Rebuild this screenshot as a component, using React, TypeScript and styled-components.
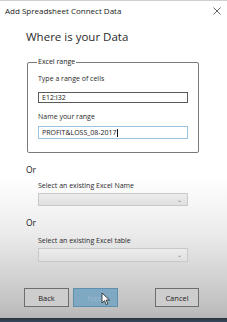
import React from "react";
import styled, { createGlobalStyle } from "styled-components";

const GlobalStyle = createGlobalStyle`
  html, body {
    margin: 0;
    padding: 0;
  }
  body {
    font-family: "Open Sans", "Noto Sans", sans-serif;
    color: #1a1a1a;
  }
`;

const Window = styled.div`
  width: 227px;
  height: 322px;
  box-sizing: border-box;
  border-top: 1px solid #cfcfcf;
  background: linear-gradient(
    to bottom,
    #ffffff 0%,
    #ffffff 55%,
    #ececec 72%,
    #d4d4d4 85%,
    #bfbfbf 96%,
    #b6b6b6 98.8%,
    #2c3440 98.9%,
    #3a4a60 100%
  );
  display: flex;
  flex-direction: column;
  overflow: hidden;
`;

const TitleBar = styled.div`
  height: 18px;
  display: flex;
  align-items: center;
  justify-content: space-between;
  padding: 0 6px 0 5px;
  font-size: 8px;
  color: #222;
`;

const CloseIcon = styled.svg`
  width: 8px;
  height: 8px;
  margin-top: 1px;
`;

const Body = styled.div`
  padding: 10px 0 0 26px;
  display: flex;
  flex-direction: column;
`;

const Heading = styled.div`
  font-size: 11.5px;
  color: #2a2a2a;
  height: 17px;
  margin-bottom: 11px;
`;

const GroupBox = styled.fieldset`
  width: 172px;
  height: 96px;
  box-sizing: border-box;
  margin: 0 0 0 1px;
  padding: 5px 0 0 10px;
  border: 1px solid #7a7a7a;
  border-radius: 2px;
`;

const Legend = styled.legend`
  font-size: 7px;
  line-height: 10px;
  padding: 0 1px;
  margin-left: -1px;
  color: #222;
`;

const FieldLabel = styled.div<{ $top?: number; $bottom?: number }>`
  font-size: 7px;
  color: #2a2a2a;
  margin-top: ${(p) => p.$top ?? 0}px;
  margin-bottom: ${(p) => p.$bottom ?? 0}px;
  height: 11px;
  line-height: 11px;
`;

const TextBox = styled.div<{ $focused?: boolean }>`
  width: 150px;
  height: ${(p) => (p.$focused ? 13 : 11)}px;
  box-sizing: border-box;
  border: 1px solid ${(p) => (p.$focused ? "#9cc3e0" : "#5a5a5a")};
  background: #fff;
  font-size: 7px;
  padding-left: 3px;
  display: flex;
  align-items: center;
  color: #1a1a1a;
`;

const Caret = styled.span`
  display: inline-block;
  width: 1px;
  height: 8px;
  background: #111;
  margin-left: 0.5px;
`;

const OrText = styled.div<{ $top: number }>`
  font-size: 8.5px;
  line-height: 12px;
  color: #222;
  margin-top: ${(p) => p.$top}px;
  height: 12px;
`;

const Indent = styled.div`
  padding-left: 12px;
  display: flex;
  flex-direction: column;
`;

const Combo = styled.div<{ $height: number }>`
  width: 150px;
  height: ${(p) => p.$height}px;
  box-sizing: border-box;
  border: 1px solid #c9c9c9;
  background: linear-gradient(#ececec, #e0e0e0);
  display: flex;
  align-items: center;
  justify-content: flex-end;
  padding-right: 5px;
  font-size: 6px;
  color: #777;
`;

const ButtonRow = styled.div`
  display: flex;
  width: 175px;
  margin: 26px 0 0 -2px;
  gap: 4px;
`;

const Button = styled.div<{ $primary?: boolean; $width: number }>`
  width: ${(p) => p.$width}px;
  height: 19px;
  box-sizing: border-box;
  border: 1px solid ${(p) => (p.$primary ? "#5f8fae" : "#6e6e6e")};
  background: ${(p) => (p.$primary ? "#7fa8c2" : "#cdcdcd")};
  font-size: 7.5px;
  color: ${(p) => (p.$primary ? "#9bbad0" : "#222")};
  display: flex;
  align-items: center;
  justify-content: center;
  position: relative;
`;

const Spacer = styled.div`
  flex: 1;
`;

const Cursor = styled.svg`
  position: absolute;
  left: 27px;
  top: 3px;
  width: 10px;
  height: 14px;
`;

export default function App() {
  return (
    <>
      <GlobalStyle />
      <Window>
        <TitleBar>
          <span>Add Spreadsheet Connect Data</span>
          <CloseIcon viewBox="0 0 8 8">
            <path d="M0.5 0.5 L7.5 7.5 M7.5 0.5 L0.5 7.5" stroke="#555" strokeWidth="0.9" />
          </CloseIcon>
        </TitleBar>
        <Body>
          <Heading>Where is your Data</Heading>
          <GroupBox>
            <Legend>Excel range</Legend>
            <FieldLabel $top={1} $bottom={8}>
              Type a range of cells
            </FieldLabel>
            <TextBox>E12:I32</TextBox>
            <FieldLabel $top={8} $bottom={4}>
              Name your range
            </FieldLabel>
            <TextBox $focused>
              PROFIT&amp;LOSS_08-2017
              <Caret />
            </TextBox>
          </GroupBox>
          <OrText $top={11}>Or</OrText>
          <Indent>
            <FieldLabel $top={4} $bottom={2}>
              Select an existing Excel Name
            </FieldLabel>
            <Combo $height={13}>⌄</Combo>
          </Indent>
          <OrText $top={11}>Or</OrText>
          <Indent>
            <FieldLabel $top={6} $bottom={2}>
              Select an existing Excel table
            </FieldLabel>
            <Combo $height={14}>⌄</Combo>
          </Indent>
          <ButtonRow>
            <Button $width={45}>Back</Button>
            <Button $primary $width={45}>
              Next
              <Cursor viewBox="0 0 10 14">
                <path
                  d="M1 1 L1 11 L3.5 8.6 L5.3 12.6 L6.9 11.9 L5.1 8 L8.5 8 Z"
                  fill="#fff"
                  stroke="#222"
                  strokeWidth="0.8"
                  strokeLinejoin="round"
                />
              </Cursor>
            </Button>
            <Spacer />
            <Button $width={44}>Cancel</Button>
          </ButtonRow>
        </Body>
      </Window>
    </>
  );
}
